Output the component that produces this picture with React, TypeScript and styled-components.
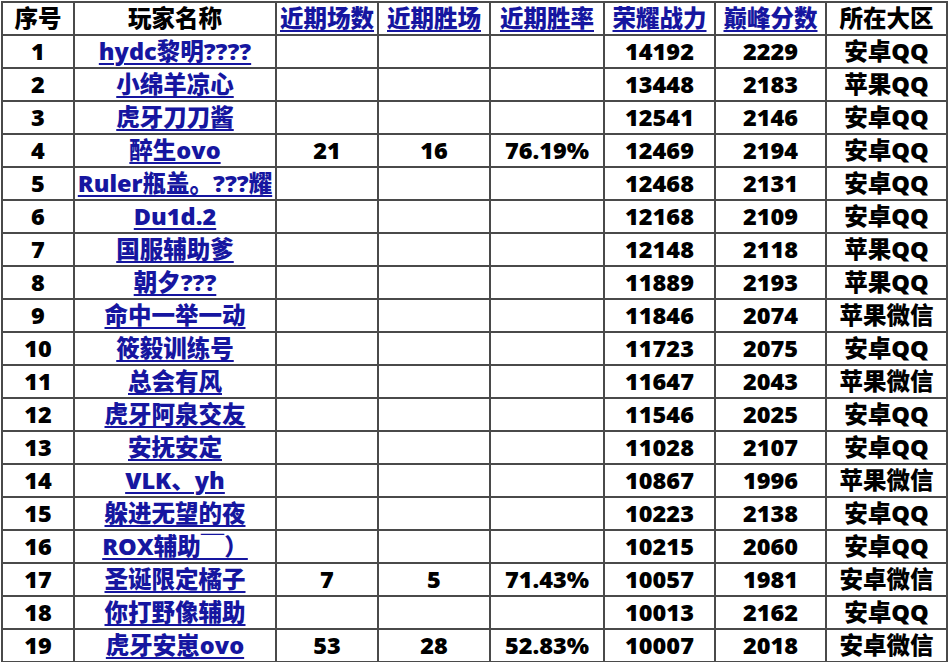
import styled, { createGlobalStyle } from 'styled-components';

const GlobalStyle = createGlobalStyle`
  html, body {
    margin: 0;
    padding: 0;
    background: #fff;
  }
`;

type Row = {
  name: string;
  games?: string;
  wins?: string;
  rate?: string;
  power: string;
  peak: string;
  zone: string;
};

const rows: Row[] = [
  { name: 'hydc黎明????', power: '14192', peak: '2229', zone: '安卓QQ' },
  { name: '小绵羊凉心', power: '13448', peak: '2183', zone: '苹果QQ' },
  { name: '虎牙刀刀酱', power: '12541', peak: '2146', zone: '安卓QQ' },
  { name: '醉生ovo', games: '21', wins: '16', rate: '76.19%', power: '12469', peak: '2194', zone: '安卓QQ' },
  { name: 'Ruler瓶盖。???耀', power: '12468', peak: '2131', zone: '安卓QQ' },
  { name: 'Du1d.2', power: '12168', peak: '2109', zone: '安卓QQ' },
  { name: '国服辅助爹', power: '12148', peak: '2118', zone: '苹果QQ' },
  { name: '朝夕???', power: '11889', peak: '2193', zone: '苹果QQ' },
  { name: '命中一举一动', power: '11846', peak: '2074', zone: '苹果微信' },
  { name: '筱毅训练号', power: '11723', peak: '2075', zone: '安卓QQ' },
  { name: '总会有风', power: '11647', peak: '2043', zone: '苹果微信' },
  { name: '虎牙阿泉交友', power: '11546', peak: '2025', zone: '安卓QQ' },
  { name: '安抚安定', power: '11028', peak: '2107', zone: '安卓QQ' },
  { name: 'VLK、yh', power: '10867', peak: '1996', zone: '苹果微信' },
  { name: '躲进无望的夜', power: '10223', peak: '2138', zone: '安卓QQ' },
  { name: 'ROX辅助￣）', power: '10215', peak: '2060', zone: '安卓QQ' },
  { name: '圣诞限定橘子', games: '7', wins: '5', rate: '71.43%', power: '10057', peak: '1981', zone: '安卓微信' },
  { name: '你打野像辅助', power: '10013', peak: '2162', zone: '安卓QQ' },
  { name: '虎牙安崽ovo', games: '53', wins: '28', rate: '52.83%', power: '10007', peak: '2018', zone: '安卓微信' },
];

const widths = [72, 202, 102, 112, 114, 111, 111, 121];

const App = () => {
  return (
    <>
      <GlobalStyle />
      <RankTable>
        <colgroup>
          {widths.map((w, i) => (
            <col key={i} style={{ width: w }} />
          ))}
        </colgroup>
        <thead>
          <tr>
            <HeadCell>序号</HeadCell>
            <HeadCell>玩家名称</HeadCell>
            <HeadCell>
              <SortLink>近期场数</SortLink>
            </HeadCell>
            <HeadCell>
              <SortLink>近期胜场</SortLink>
            </HeadCell>
            <HeadCell>
              <SortLink>近期胜率</SortLink>
            </HeadCell>
            <HeadCell>
              <SortLink>荣耀战力</SortLink>
            </HeadCell>
            <HeadCell>
              <SortLink>巅峰分数</SortLink>
            </HeadCell>
            <HeadCell>所在大区</HeadCell>
          </tr>
        </thead>
        <tbody>
          {rows.map((r, i) => (
            <tr key={i}>
              <Cell>{i + 1}</Cell>
              <Cell>
                <PlayerLink>{r.name}</PlayerLink>
              </Cell>
              <Cell>{r.games}</Cell>
              <Cell>{r.wins}</Cell>
              <Cell>{r.rate}</Cell>
              <Cell>{r.power}</Cell>
              <Cell>{r.peak}</Cell>
              <Cell>{r.zone}</Cell>
            </tr>
          ))}
        </tbody>
      </RankTable>
    </>
  );
};

const RankTable = styled.table`
  width: 947px;
  table-layout: fixed;
  border-collapse: collapse;
  margin: 1px 0 0 1px;
  font-family: 'Open Sans', 'Noto Sans CJK SC', sans-serif;
  font-weight: 800;
  font-size: 23.5px;
  color: #000;
`;

const Cell = styled.td`
  height: 31px;
  padding: 0;
  border: 2px solid #4a4a4a;
  text-align: center;
  line-height: 31px;
  white-space: nowrap;
  overflow: hidden;
`;

const HeadCell = styled(Cell).attrs({ as: 'th' })`
  font-weight: 800;
`;

const SortLink = styled.a`
  color: #1616a0;
  text-decoration: underline;
  text-underline-offset: 3px;
  text-decoration-thickness: 2px;
  cursor: pointer;
`;

const PlayerLink = styled(SortLink)``;

export default App;
